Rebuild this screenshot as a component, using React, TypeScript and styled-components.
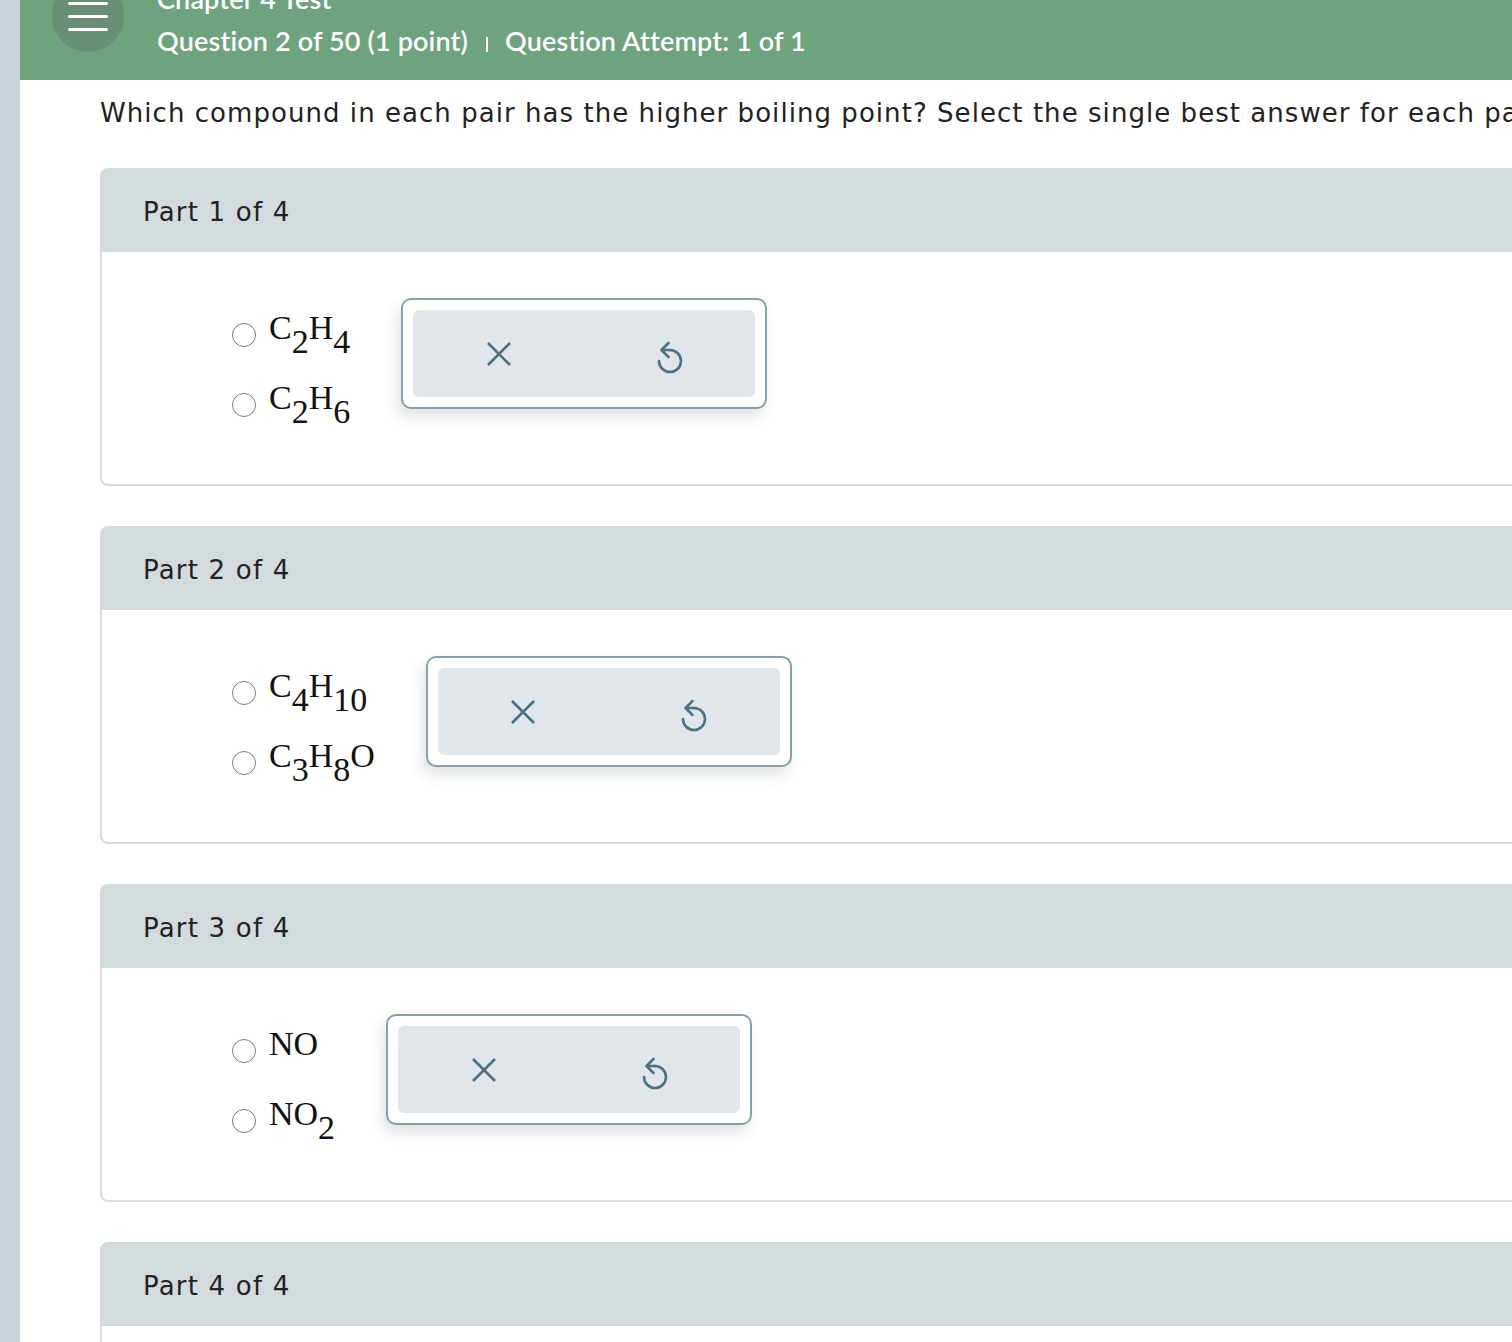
import React from 'react'
import styled, { createGlobalStyle } from 'styled-components'

const GlobalStyle = createGlobalStyle`
  html, body {
    margin: 0;
    padding: 0;
    background: #ffffff;
    overflow: hidden;
  }
  body {
    font-family: "DejaVu Sans", Verdana, sans-serif;
    color: #222;
  }
`

const Page = styled.div`
  display: flex;
  min-height: 1342px;
`

const SideStrip = styled.div`
  flex: 0 0 20px;
  background: #c8d2d7;
`

const Main = styled.div`
  flex: 1;
  min-width: 0;
`

const TopBar = styled.header`
  height: 80px;
  background: #6fa37e;
  display: flex;
  align-items: flex-start;
  padding-left: 32px;
  overflow: hidden;
`

const MenuButton = styled.button`
  width: 72px;
  height: 72px;
  margin-top: -20px;
  border: none;
  border-radius: 50%;
  background: #698f79;
  display: flex;
  flex-direction: column;
  align-items: center;
  justify-content: center;
  gap: 10px;
  padding: 0;
  cursor: pointer;
`

const MenuLine = styled.span`
  display: block;
  width: 40px;
  height: 3px;
  border-radius: 2px;
  background: #ffffff;
`

const TitleBlock = styled.div`
  margin-left: 33px;
  margin-top: -18px;
  display: flex;
  flex-direction: column;
  gap: 8px;
  color: #ffffff;
  font-family: Lato, "Open Sans", sans-serif;
  font-weight: 600;
  font-size: 27px;
  line-height: 34px;
  letter-spacing: 0.15px;
  white-space: nowrap;
`

const Divider = styled.span`
  display: inline-block;
  width: 2px;
  height: 15px;
  background: #ffffff;
  margin: 0 17px 0 18px;
  vertical-align: -1px;
`

const Content = styled.div`
  padding: 16px 0 0 80px;
  width: 1700px;
`

const Prompt = styled.p`
  margin: 0 0 38px;
  font-size: 26px;
  line-height: 34px;
  white-space: nowrap;
  letter-spacing: 1.05px;
`

const PartCard = styled.section`
  margin-bottom: 40px;
`

const PartHeader = styled.div`
  height: 84px;
  background: #d3dbdf;
  border-top-left-radius: 8px;
  display: flex;
  align-items: center;
  padding-left: 43px;
  font-size: 26px;
  letter-spacing: 1.2px;
  padding-top: 4px;
  box-sizing: border-box;
`

const PartBody = styled.div`
  height: 234px;
  box-sizing: border-box;
  border: 2px solid #d6dde1;
  border-top: none;
  border-bottom-left-radius: 8px;
  padding: 46px 0 0 130px;
  display: flex;
  align-items: flex-start;
  gap: 51px;
`

const Options = styled.div`
  display: flex;
  flex-direction: column;
  padding-top: 2px;
`

const OptionRow = styled.label`
  display: flex;
  align-items: center;
  height: 70px;
  font-family: "Liberation Serif", "Times New Roman", serif;
  font-size: 34px;
  color: #111;
  white-space: nowrap;
  cursor: pointer;
`

const Radio = styled.span`
  flex: 0 0 auto;
  width: 22px;
  height: 22px;
  border: 1.6px solid #7a7a7a;
  border-radius: 50%;
  margin-right: 13px;
  background: #fff;
`

const FormulaBox = styled.span`
  display: block;
  line-height: 34px;
  padding-bottom: 14px;
`

const Sub = styled.sub`
  font-size: 34px;
  line-height: 0;
  vertical-align: -14px;
`

const ToolBox = styled.div`
  width: 366px;
  height: 111px;
  box-sizing: border-box;
  border: 2px solid #87a0aa;
  border-radius: 10px;
  background: #fff;
  padding: 10px;
  box-shadow: -4px 8px 14px rgba(60, 80, 90, 0.16);
`

const ToolInner = styled.div`
  height: 100%;
  border-radius: 6px;
  background: #e0e6e9;
  display: flex;
`

const ToolButton = styled.button`
  flex: 1;
  border: none;
  background: transparent;
  display: flex;
  align-items: center;
  justify-content: center;
  padding: 0;
  cursor: pointer;
`

const iconColor = '#4d717f'

const ClearIcon = () => (
  <svg width="26" height="26" viewBox="0 0 26 26" fill="none">
    <path d="M2 2 L24 24 M24 2 L2 24" stroke={iconColor} strokeWidth="2.6" strokeLinecap="butt" />
  </svg>
)

const UndoIcon = () => (
  <svg width="28" height="36" viewBox="0 0 28 36" fill="none" style={{ marginTop: 6 }}>
    <path d="M14 11 A11 11 0 1 1 3 22" stroke={iconColor} strokeWidth="2.6" strokeLinecap="round" />
    <path
      d="M14 11 H6 M12.5 4 L5.5 11 L12.5 18"
      stroke={iconColor}
      strokeWidth="2.6"
      strokeLinecap="round"
      strokeLinejoin="round"
    />
  </svg>
)

type Formula = Array<[string, string?]>

type Part = {
  title: string
  options: Formula[]
}

const parts: Part[] = [
  {
    title: 'Part 1 of 4',
    options: [
      [['C', '2'], ['H', '4']],
      [['C', '2'], ['H', '6']],
    ],
  },
  {
    title: 'Part 2 of 4',
    options: [
      [['C', '4'], ['H', '10']],
      [['C', '3'], ['H', '8'], ['O']],
    ],
  },
  {
    title: 'Part 3 of 4',
    options: [[['NO']], [['NO', '2']]],
  },
]

const FormulaText = ({ formula }: { formula: Formula }) => (
  <FormulaBox>
    {formula.map(([el, n], i) => (
      <React.Fragment key={i}>
        {el}
        {n && <Sub>{n}</Sub>}
      </React.Fragment>
    ))}
  </FormulaBox>
)

const PartSection = ({ part }: { part: Part }) => (
  <PartCard>
    <PartHeader>{part.title}</PartHeader>
    <PartBody>
      <Options>
        {part.options.map((f, i) => (
          <OptionRow key={i}>
            <Radio />
            <FormulaText formula={f} />
          </OptionRow>
        ))}
      </Options>
      <ToolBox>
        <ToolInner>
          <ToolButton aria-label="Clear">
            <ClearIcon />
          </ToolButton>
          <ToolButton aria-label="Undo">
            <UndoIcon />
          </ToolButton>
        </ToolInner>
      </ToolBox>
    </PartBody>
  </PartCard>
)

const App = () => (
  <>
    <GlobalStyle />
    <Page>
      <SideStrip />
      <Main>
        <TopBar>
          <MenuButton aria-label="Menu">
            <MenuLine />
            <MenuLine />
            <MenuLine />
          </MenuButton>
          <TitleBlock>
            <span>Chapter 4 Test</span>
            <span>
              Question 2 of 50 (1 point)
              <Divider />
              Question Attempt: 1 of 1
            </span>
          </TitleBlock>
        </TopBar>
        <Content>
          <Prompt>
            Which compound in each pair has the higher boiling point? Select the single best answer for each pair.
          </Prompt>
          {parts.map((p) => (
            <PartSection key={p.title} part={p} />
          ))}
          <PartCard>
            <PartHeader>Part 4 of 4</PartHeader>
            <PartBody />
          </PartCard>
        </Content>
      </Main>
    </Page>
  </>
)

export default App
